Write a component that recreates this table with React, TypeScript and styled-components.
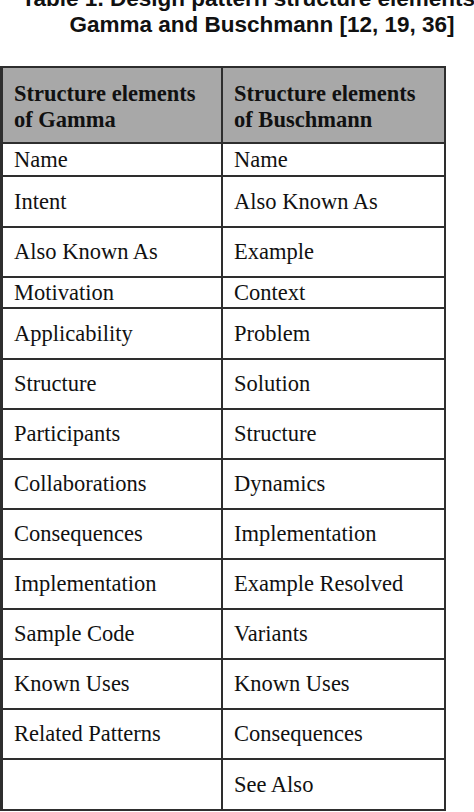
import React from 'react';
import styled, { createGlobalStyle } from 'styled-components';

const GlobalStyle = createGlobalStyle`
  html, body {
    margin: 0;
    padding: 0;
    background: #ffffff;
    overflow: hidden;
  }
`;

const Page = styled.div`
  width: 474px;
  height: 812px;
  overflow: hidden;
`;

const Caption = styled.div`
  width: 524px;
  margin-top: -14px;
  font-family: 'Liberation Sans', Arial, sans-serif;
  font-weight: bold;
  font-size: 22.5px;
  line-height: 26px;
  color: #111;
  text-align: center;
  white-space: nowrap;
`;

const Table = styled.div`
  display: grid;
  grid-template-columns: 218px 221px;
  gap: 2px;
  width: fit-content;
  margin-top: 28px;
  background: #2e2e2e;
  border-style: solid;
  border-color: #2e2e2e;
  border-width: 2px 2px 2px 3px;
`;

const Cell = styled.div<{ $head?: boolean; $h: number }>`
  display: flex;
  align-items: center;
  box-sizing: border-box;
  height: ${p => p.$h}px;
  padding: ${p => (p.$head ? '3px 8px 0 11px' : '0 8px 0 11px')};
  background: ${p => (p.$head ? '#a8a8a8' : '#ffffff')};
  font-family: 'Liberation Serif', 'Times New Roman', serif;
  font-weight: ${p => (p.$head ? 'bold' : 'normal')};
  font-size: 22.5px;
  line-height: 26px;
  color: #111;
`;

const rows: [string, string, number][] = [
  ['Name', 'Name', 31],
  ['Intent', 'Also Known As', 49],
  ['Also Known As', 'Example', 48],
  ['Motivation', 'Context', 29],
  ['Applicability', 'Problem', 49],
  ['Structure', 'Solution', 48],
  ['Participants', 'Structure', 48],
  ['Collaborations', 'Dynamics', 48],
  ['Consequences', 'Implementation', 48],
  ['Implementation', 'Example Resolved', 48],
  ['Sample Code', 'Variants', 48],
  ['Known Uses', 'Known Uses', 48],
  ['Related Patterns', 'Consequences', 48],
  ['', 'See Also', 49],
];

const App: React.FC = () => {
  return (
    <Page>
      <GlobalStyle />
      <Caption>
        Table 1. Design pattern structure elements of
        <br />
        Gamma and Buschmann [12, 19, 36]
      </Caption>
      <Table>
        <Cell $head $h={74}>
          Structure elements
          <br />
          of Gamma
        </Cell>
        <Cell $head $h={74}>
          Structure elements
          <br />
          of Buschmann
        </Cell>
        {rows.map(([gamma, buschmann, h], i) => (
          <React.Fragment key={i}>
            <Cell $h={h}>{gamma}</Cell>
            <Cell $h={h}>{buschmann}</Cell>
          </React.Fragment>
        ))}
      </Table>
    </Page>
  );
};

export default App;
